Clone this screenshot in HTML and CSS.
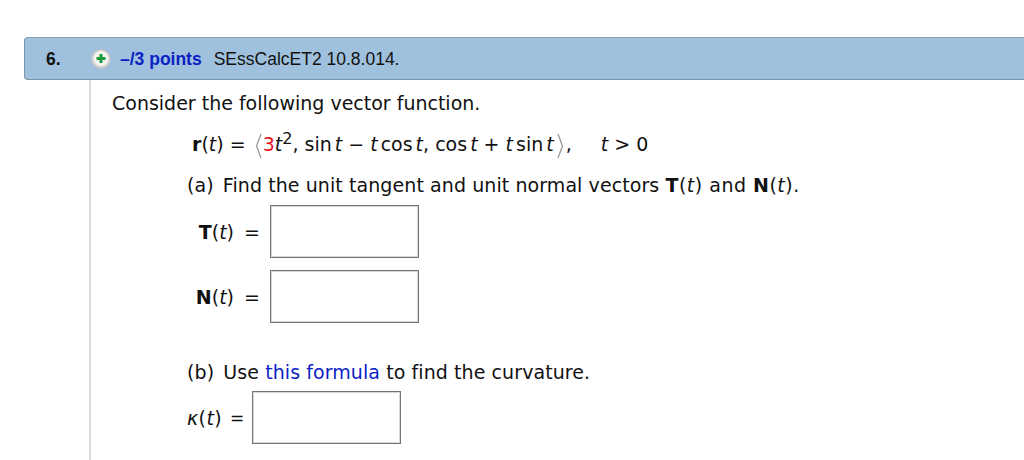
FILE: index.html
```html
<!DOCTYPE html>
<html>
<head>
    <title>Question 6</title>
    <link rel="stylesheet" href="styles.css">
</head>
<body>
    <div class="question-head">
        <span class="q-num">6.</span>
        <span class="plus-btn">
            <svg width="20" height="20" viewBox="0 0 20 20">
                <circle cx="10" cy="10" r="9.5" fill="#d4d4d0" stroke="#b9c2c8"/>
                <circle cx="10" cy="9.5" r="7.5" fill="#f4f4f2"/>
                <path d="M10 5v9M5.5 9.5h9" stroke="#1c9a3a" stroke-width="3"/>
            </svg>
        </span>
        <span class="points">&ndash;/3 points</span>
        <span class="q-code">SEssCalcET2 10.8.014.</span>
    </div>
    <div class="question-body">
        <p class="line intro">Consider the following vector function.</p>
        <p class="line math"><b>r</b>(<i>t</i>) = <svg class="bracket open" width="7" height="26" viewBox="0 0 7 26"><path d="M6 1L1.5 13 6 25" fill="none" stroke="#999" stroke-width="1.3"/></svg><span class="red">3</span><i>t</i><sup>2</sup>, sin<span class="thin"></span><i>t</i> &minus; <i>t</i><span class="thin"></span>cos<span class="thin"></span><i>t</i>, cos<span class="thin"></span><i>t</i> + <i>t</i><span class="thin"></span>sin<span class="thin"></span><i>t</i><svg class="bracket close" width="7" height="26" viewBox="0 0 7 26"><path d="M1 1l4.5 12L1 25" fill="none" stroke="#999" stroke-width="1.3"/></svg>,<span class="gap"></span><i>t</i> &gt; 0</p>
        <p class="line part"><span class="tag">(a)</span> Find the unit tangent and unit normal vectors <span class="tail"><b>T</b>(<i>t</i>) and <b>N</b>(<i>t</i>).</span></p>
        <div class="answer-row first">
            <span class="label"><b>T</b>(<i>t</i>)</span>
            <span class="eq">=</span>
            <span class="answer-box"></span>
        </div>
        <div class="answer-row second">
            <span class="label"><b>N</b>(<i>t</i>)</span>
            <span class="eq">=</span>
            <span class="answer-box"></span>
        </div>
        <p class="line part-b"><span class="tag">(b)</span> Use <span class="link">this formula</span> to find the curvature.</p>
        <div class="answer-row third">
            <span class="kappa"><i>&kappa;</i>(<i>t</i>)</span>
            <span class="eq small">=</span>
            <span class="answer-box"></span>
        </div>
    </div>
</body>
</html>
```

FILE: styles.css
```css
html, body { margin: 0; padding: 0; background: #fff; }
body {
    height: 460px;
    overflow: hidden;
    padding-top: 37px;
    box-sizing: border-box;
    font-family: "DejaVu Sans", sans-serif;
    font-size: 19px;
    color: #111;
}

.question-head {
    margin-left: 24px;
    height: 43px;
    box-sizing: border-box;
    background: #9fc1dd;
    border: 1px solid #7c93a8;
    border-right: none;
    border-top-color: #8ba0b2;
    border-radius: 4px 0 0 4px;
    display: flex;
    align-items: center;
    padding-top: 1px;
    font-family: "Liberation Sans", Arial, sans-serif;
    font-size: 17.5px;
}
.q-num { width: 66px; padding-left: 21px; box-sizing: border-box; font-weight: bold; }
.plus-btn { display: flex; width: 29px; }
.points { color: #0a1fc4; font-weight: bold; margin-right: 12px; }
.q-code { color: #111; }

.question-body {
    margin-left: 89px;
    height: 380px;
    border-left: 2px solid #ddd;
    padding-left: 21px;
}
.line { margin: 0; height: 24px; line-height: 24px; white-space: nowrap; }
.intro { padding-top: 11px; }
.math { margin-top: 17px; margin-left: 80px; }
.part { margin-top: 17px; margin-left: 75px; letter-spacing: 0.08px; }
.part-b { margin-top: 37px; margin-left: 75px; letter-spacing: 0.08px; }
.tag { margin-right: 3px; }
.tail { letter-spacing: 0.5px; }
.link { color: #0a1fc4; }
.red { color: #e8141c; }
.gap { display: inline-block; width: 29px; }
.thin { display: inline-block; width: 3px; }
sup { font-size: 16px; line-height: 0; vertical-align: 7px; }
.bracket { vertical-align: -8px; }
.bracket.open { margin: 0 1px 0 3px; }
.bracket.close { margin: 0 2px 0 3px; }

.answer-row { display: flex; align-items: center; height: 53px; }
.answer-row.first { margin-top: 8px; }
.answer-row.second { margin-top: 12px; }
.answer-row.third { margin-top: 7px; }
.label { width: 122px; text-align: right; }
.eq { width: 36px; text-align: center; }
.eq.small { width: 30px; font-size: 17px; }
.kappa { margin-left: 75px; width: 35px; letter-spacing: 0.4px; }
.answer-box {
    width: 149px;
    height: 53px;
    box-sizing: border-box;
    border: 1px solid #757575;
    box-shadow: inset 0 0 0 1px #d8d8d8;
    background: #fff;
}
```
